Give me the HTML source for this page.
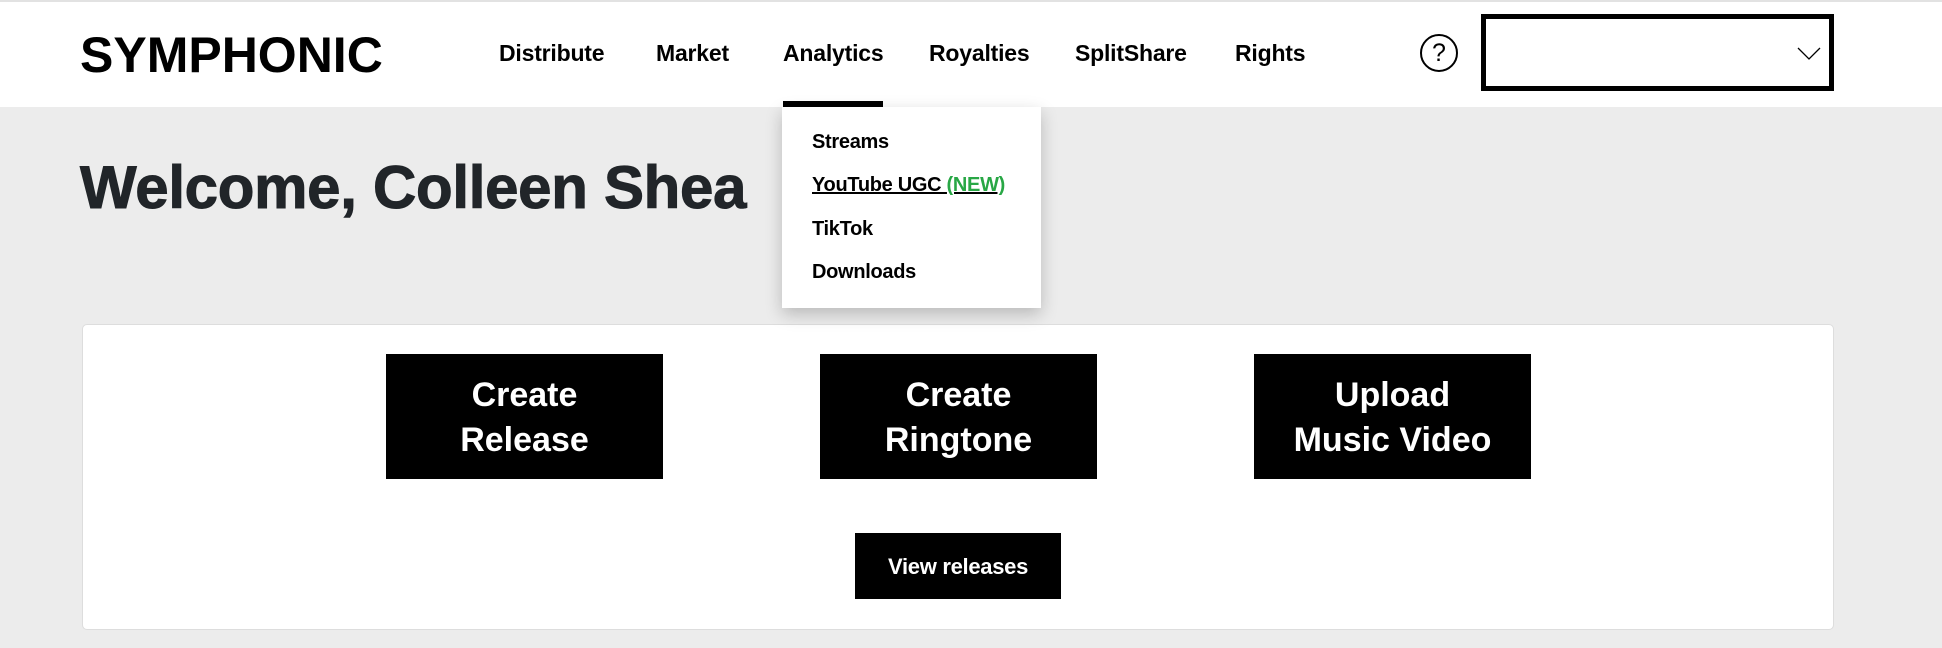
<!DOCTYPE html>
<html><head><meta charset="utf-8"><style>
*{margin:0;padding:0;box-sizing:border-box}
body{width:1942px;height:648px;background:#ececec;font-family:"Liberation Sans",sans-serif;position:relative;overflow:hidden;color:#000}
.hdr{position:absolute;left:0;top:0;width:1942px;height:107px;background:#fff;border-top:2px solid #e2e2e2}
.logo{position:absolute;left:80px;top:28px;font-size:50px;font-weight:bold;letter-spacing:0px;line-height:50px;transform:scaleX(1.0);transform-origin:left}
.nav{position:absolute;top:37px;font-size:23px;font-weight:bold;line-height:28px;letter-spacing:-0.2px}
.ul{position:absolute;left:783px;top:99px;width:100px;height:7px;background:#000}
.help{position:absolute;left:1420px;top:32px;width:38px;height:38px;border:2px solid #000;border-radius:50%;text-align:center;font-size:25px;line-height:34px}
.sel{position:absolute;left:1481px;top:12px;width:353px;height:77px;border:5px solid #000;background:#fff}
h1{position:absolute;left:80px;top:153px;font-size:60px;font-weight:bold;color:#212529;letter-spacing:-0.3px;line-height:70px;-webkit-text-stroke:1px #212529}
.dd{position:absolute;left:782px;top:107px;width:259px;height:201px;background:#fff;box-shadow:0 6px 16px rgba(0,0,0,.22);z-index:2}
.dd div{position:absolute;left:30px;font-size:20px;font-weight:bold;line-height:24px;letter-spacing:-0.3px}
.card{position:absolute;left:82px;top:324px;width:1752px;height:306px;background:#fff;border:1px solid #ddd;border-radius:5px}
.btn{position:absolute;top:354px;width:277px;height:125px;background:#000;color:#fff;font-size:34px;font-weight:bold;text-align:center;line-height:45px;padding-top:19px}
.vr{position:absolute;left:855px;top:533px;width:206px;height:66px;background:#000;color:#fff;font-size:22px;font-weight:bold;text-align:center;line-height:68px;letter-spacing:-0.3px}
</style></head><body>
<div class="hdr">
<div class="logo">SYMPHONIC</div>
<div class="nav" style="left:499px">Distribute</div>
<div class="nav" style="left:656px">Market</div>
<div class="nav" style="left:783px">Analytics</div>
<div class="nav" style="left:929px">Royalties</div>
<div class="nav" style="left:1075px">SplitShare</div>
<div class="nav" style="left:1235px">Rights</div>
<div class="ul"></div>
<div class="help">?</div>
<div class="sel"><svg style="position:absolute;left:311px;top:28px" width="24" height="14" viewBox="0 0 24 14"><path d="M1 1 L12 12 L23 1" fill="none" stroke="#000" stroke-width="1.3"/></svg></div>
</div>
<h1>Welcome, Colleen Shea</h1>
<div class="dd">
<div style="top:23px">Streams</div>
<div style="top:66px;text-decoration:underline">YouTube UGC <span style="color:#28a745">(NEW)</span></div>
<div style="top:110px">TikTok</div>
<div style="top:153px">Downloads</div>
</div>
<div class="card"></div>
<div class="btn" style="left:386px">Create<br>Release</div>
<div class="btn" style="left:820px">Create<br>Ringtone</div>
<div class="btn" style="left:1254px">Upload<br>Music Video</div>
<div class="vr">View releases</div>
</body></html>
